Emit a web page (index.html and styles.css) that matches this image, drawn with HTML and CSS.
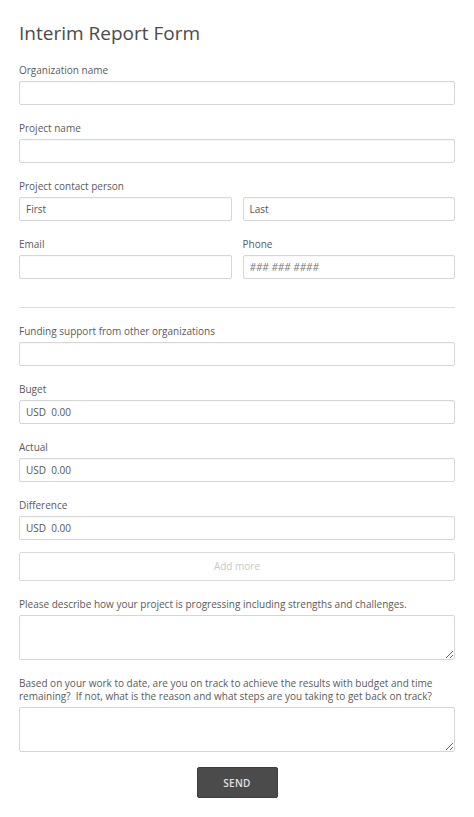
FILE: index.html
```html
<!DOCTYPE html>
<html>
<head>
<meta charset="utf-8">
<link rel="stylesheet" href="styles.css">
</head>
<body>
<form class="form">
  <h1 class="title">Interim Report Form</h1>

  <div class="field">
    <label class="label">Organization name</label>
    <input class="input" type="text">
  </div>

  <div class="field">
    <label class="label">Project name</label>
    <input class="input" type="text">
  </div>

  <div class="field">
    <label class="label">Project contact person</label>
    <div class="row">
      <input class="input" type="text" value="First">
      <input class="input" type="text" value="Last">
    </div>
  </div>

  <div class="row">
    <div class="field">
      <label class="label">Email</label>
      <input class="input" type="text">
    </div>
    <div class="field">
      <label class="label">Phone</label>
      <input class="input phone" type="text" placeholder="### ### ####">
    </div>
  </div>

  <hr class="divider">

  <div class="field">
    <label class="label">Funding support from other organizations</label>
    <input class="input" type="text">
  </div>

  <div class="field">
    <label class="label">Buget</label>
    <input class="input" type="text" value="USD  0.00">
  </div>

  <div class="field">
    <label class="label">Actual</label>
    <input class="input" type="text" value="USD  0.00">
  </div>

  <div class="field field-tight">
    <label class="label">Difference</label>
    <input class="input" type="text" value="USD  0.00">
  </div>

  <button type="button" class="add-more">Add more</button>

  <div class="field">
    <label class="label">Please describe how your project is progressing including strengths and challenges.</label>
    <textarea class="textarea"></textarea>
  </div>

  <div class="field field-last">
    <label class="label">Based on your work to date, are you on track to achieve the results with budget and time remaining?&nbsp; If not, what is the reason and what steps are you taking to get back on track?</label>
    <textarea class="textarea"></textarea>
  </div>

  <div class="actions">
    <button type="button" class="send">SEND</button>
  </div>
</form>
</body>
</html>
```

FILE: styles.css
```css
* {
  box-sizing: border-box;
}

html, body {
  margin: 0;
  padding: 0;
  background: #ffffff;
}

body {
  font-family: "Open Sans", "Liberation Sans", sans-serif;
  color: #555555;
}

.form {
  padding: 20px 19px 0 19px;
}

.title {
  margin: 0 0 18px 0;
  font-size: 19px;
  line-height: 26px;
  font-weight: 400;
  color: #4a4a4a;
}

.field {
  display: flex;
  flex-direction: column;
  margin-bottom: 17px;
}

.field-tight {
  margin-bottom: 12px;
}

.field-last {
  margin-bottom: 15px;
}

.label {
  display: block;
  font-size: 10px;
  line-height: 13px;
  color: #5a5a5a;
  margin-bottom: 4px;
}

.row {
  display: grid;
  grid-template-columns: 1fr 1fr;
  column-gap: 11px;
}

.input {
  display: block;
  width: 100%;
  height: 24px;
  margin: 0;
  padding: 0 6px;
  border: 1px solid #d6d6d6;
  border-radius: 2px;
  background: #ffffff;
  font-family: "Open Sans", "Liberation Sans", sans-serif;
  font-size: 10px;
  color: #555555;
  outline: none;
  box-shadow: inset 0 1px 1px rgba(0, 0, 0, 0.03);
}

.input::placeholder {
  color: #777777;
  font-style: italic;
}

.divider {
  margin: 11px 0 17px 0;
  border: 0;
  border-top: 1px solid #dcdcdc;
  height: 0;
}

.add-more {
  display: block;
  width: 100%;
  height: 29px;
  margin: 0 0 17px 0;
  padding: 0 0 2px 0;
  border: 1px solid #d9d9d9;
  border-radius: 2px;
  background: #ffffff;
  font-family: "Open Sans", "Liberation Sans", sans-serif;
  font-size: 10px;
  color: #c8c8c8;
}

.textarea {
  display: block;
  width: 100%;
  height: 45px;
  margin: 0;
  padding: 4px 6px;
  border: 1px solid #d6d6d6;
  border-radius: 2px;
  background: #ffffff;
  font-family: "Open Sans", "Liberation Sans", sans-serif;
  font-size: 10px;
  resize: vertical;
  outline: none;
}

.actions {
  display: flex;
  justify-content: center;
  padding-bottom: 19px;
}

.send {
  width: 81px;
  height: 31px;
  margin: 0;
  padding: 0;
  border: 1px solid #3e3e3e;
  border-radius: 2px;
  background: #4b4b4b;
  color: #e0e0e0;
  font-family: "Open Sans", "Liberation Sans", sans-serif;
  font-size: 10px;
  font-weight: 600;
  letter-spacing: 0.3px;
}
```
